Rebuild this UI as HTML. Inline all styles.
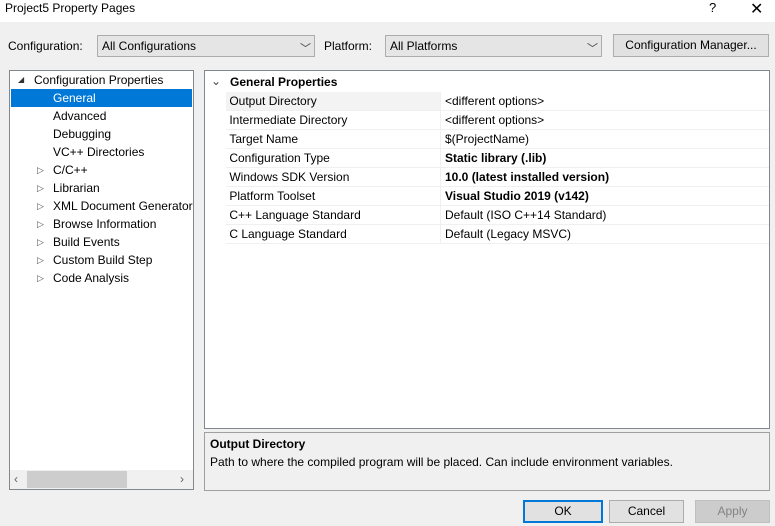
<!DOCTYPE html>
<html><head><meta charset="utf-8"><style>
*{box-sizing:border-box}
body{margin:0;width:775px;height:526px;background:#f0f0f0;font-family:"Liberation Sans",sans-serif;font-size:12px;color:#000;position:relative;overflow:hidden}
.a{position:absolute}
.title{left:0;top:0;width:775px;height:22px;background:#fff}
.combo{background:#e5e5e5;border:1px solid #adadad;height:22px;line-height:20px;padding-left:4px}
.btn{background:#e1e1e1;border:1px solid #adadad;height:23px;line-height:21px;text-align:center}
.tree{left:9px;top:70px;width:185px;height:420px;background:#fff;border:1px solid #828790}
.ti{position:absolute;left:0;width:183px;height:18px;line-height:18px;white-space:nowrap}
.grid{left:204px;top:70px;width:566px;height:359px;background:#fff;border:1px solid #828790}
.row{position:absolute;left:21px;width:543px;height:19px;line-height:18px;border-bottom:1px solid #f0f0f0}
.row span{position:absolute;left:214px;border-left:1px solid #f0f0f0;padding-left:4px;height:18px;width:329px}
.row b,.row span b{font-weight:bold}
.desc{left:204px;top:432px;width:566px;height:59px;border:1px solid #a0a0a0;background:#f0f0f0}
.arr{color:#404040;font-size:9px}
</style></head><body>
<div class="a title"></div>
<div class="a" style="left:5px;top:1px;">Project5 Property Pages</div>
<div class="a" style="left:709px;top:0px;font-size:13px">?</div>
<div class="a" style="left:750px;top:-1px;font-size:16px">✕</div>

<div class="a" style="left:8px;top:39px">Configuration:</div>
<div class="a combo" style="left:97px;top:35px;width:218px">All Configurations</div>
<div class="a arr" style="left:300px;top:40px;font-size:11px">﹀</div>
<div class="a" style="left:324px;top:39px">Platform:</div>
<div class="a combo" style="left:385px;top:35px;width:217px">All Platforms</div>
<div class="a arr" style="left:587px;top:40px;font-size:11px">﹀</div>
<div class="a btn" style="left:613px;top:34px;width:156px">Configuration Manager...</div>

<div class="a tree">
<div class="ti" style="top:0"><span class="a" style="left:8px;font-size:8px;color:#333">◢</span><span class="a" style="left:24px">Configuration Properties</span></div>
<div class="ti" style="top:18px;left:1px;width:181px;background:#0078d7;color:#fff"><span class="a" style="left:42px">General</span></div>
<div class="ti" style="top:36px"><span class="a" style="left:43px">Advanced</span></div>
<div class="ti" style="top:54px"><span class="a" style="left:43px">Debugging</span></div>
<div class="ti" style="top:72px"><span class="a" style="left:43px">VC++ Directories</span></div>
<div class="ti" style="top:90px"><span class="a" style="left:27px;font-size:9px;color:#555">▷</span><span class="a" style="left:43px">C/C++</span></div>
<div class="ti" style="top:108px"><span class="a" style="left:27px;font-size:9px;color:#555">▷</span><span class="a" style="left:43px">Librarian</span></div>
<div class="ti" style="top:126px"><span class="a" style="left:27px;font-size:9px;color:#555">▷</span><span class="a" style="left:43px">XML Document Generator</span></div>
<div class="ti" style="top:144px"><span class="a" style="left:27px;font-size:9px;color:#555">▷</span><span class="a" style="left:43px">Browse Information</span></div>
<div class="ti" style="top:162px"><span class="a" style="left:27px;font-size:9px;color:#555">▷</span><span class="a" style="left:43px">Build Events</span></div>
<div class="ti" style="top:180px"><span class="a" style="left:27px;font-size:9px;color:#555">▷</span><span class="a" style="left:43px">Custom Build Step</span></div>
<div class="ti" style="top:198px"><span class="a" style="left:27px;font-size:9px;color:#555">▷</span><span class="a" style="left:43px">Code Analysis</span></div>
<div class="a" style="left:0;top:399px;width:183px;height:19px;background:#f0f0f0"></div>
<div class="a" style="left:17px;top:400px;width:100px;height:17px;background:#cdcdcd"></div>
<div class="a" style="left:4px;top:401px;color:#606060">‹</div>
<div class="a" style="left:170px;top:401px;color:#606060">›</div>
</div>

<div class="a grid">
<div class="a" style="left:6px;top:3px;color:#444">⌄</div>
<div class="a" style="left:25px;top:4px;font-weight:bold">General Properties</div>
<div class="row" style="top:21px;background:linear-gradient(90deg,#f3f3f3 214px,#fff 214px)">&nbsp;Output Directory<span>&lt;different options&gt;</span></div>
<div class="row" style="top:40px">&nbsp;Intermediate Directory<span>&lt;different options&gt;</span></div>
<div class="row" style="top:59px">&nbsp;Target Name<span>$(ProjectName)</span></div>
<div class="row" style="top:78px">&nbsp;Configuration Type<span><b>Static library (.lib)</b></span></div>
<div class="row" style="top:97px">&nbsp;Windows SDK Version<span><b>10.0 (latest installed version)</b></span></div>
<div class="row" style="top:116px">&nbsp;Platform Toolset<span><b>Visual Studio 2019 (v142)</b></span></div>
<div class="row" style="top:135px">&nbsp;C++ Language Standard<span>Default (ISO C++14 Standard)</span></div>
<div class="row" style="top:154px">&nbsp;C Language Standard<span>Default (Legacy MSVC)</span></div>
</div>

<div class="a desc">
<div class="a" style="left:5px;top:4px;font-weight:bold">Output Directory</div>
<div class="a" style="left:5px;top:22px">Path to where the compiled program will be placed. Can include environment variables.</div>
</div>

<div class="a btn" style="left:523px;top:500px;width:80px;border:2px solid #0078d7;line-height:19px">OK</div>
<div class="a btn" style="left:609px;top:500px;width:75px">Cancel</div>
<div class="a btn" style="left:695px;top:500px;width:75px;background:#ccc;border-color:#bfbfbf;color:#838383">Apply</div>
</body></html>
